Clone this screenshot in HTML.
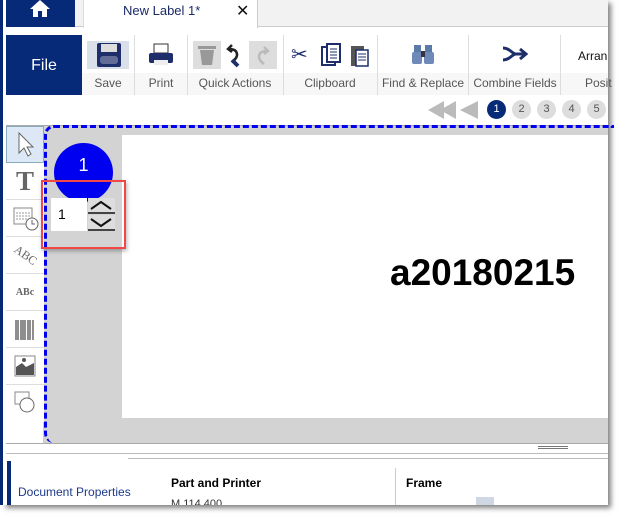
<!DOCTYPE html><html><head><style>
*{margin:0;padding:0;box-sizing:border-box}
body{width:623px;height:519px;background:#fff;position:relative;overflow:hidden;font-family:"Liberation Sans",sans-serif}
.a{position:absolute}
.lbl{position:absolute;top:76px;font-size:12px;color:#555;text-align:center}
.sep{position:absolute;top:35px;width:1px;height:60px;background:#ddd}
.pg{position:absolute;top:100px;width:19px;height:19px;border-radius:50%;background:#ddd;color:#555;font-size:11px;text-align:center;line-height:19px}
.tb{position:absolute;left:6px;width:38px;height:37px;border-bottom:1px solid #ddd;background:#fff;font-family:"Liberation Serif",serif;color:#666;text-align:center;overflow:hidden}
</style></head><body>
<div class="a" style="left:0;top:0;width:3px;height:505px;background:#062a78"></div>
<div class="a" style="left:3px;top:0;width:605px;height:505px;background:#fff;box-shadow:3px 3px 5px rgba(0,0,0,.5)"></div>
<div class="a" style="left:6px;top:0;width:602px;height:27px;background:#f2f2f2;border-bottom:1px solid #ccc"></div>
<div class="a" style="left:6px;top:0;width:69px;height:27px;background:#062a78"></div>
<svg class="a" style="left:28px;top:0" width="24" height="18"><path d="M2 9 L12 0 L22 9 L19 9 L19 17 L14 17 L14 11 L10 11 L10 17 L5 17 L5 9Z" fill="#fff"/></svg>
<div class="a" style="left:83px;top:0;width:175px;height:28px;background:#fff;border-right:1px solid #ccc;border-left:1px solid #ddd"></div>
<div class="a" style="left:123px;top:3px;font-size:13px;color:#1a2a6a">New Label 1*</div>
<div class="a" style="left:236px;top:1px;font-size:16px;color:#111">✕</div>
<div class="a" style="left:6px;top:35px;width:602px;height:60px;background:#fff"></div>
<div class="a" style="left:81px;top:73px;width:527px;height:22px;background:#f7f7f7"></div>
<div class="a" style="left:6px;top:35px;width:76px;height:60px;background:#062a78;color:#fff;font-size:16px;text-align:center;line-height:62px">File</div>
<div class="a" style="left:87px;top:41px;width:42px;height:28px;background:#dae0ea"></div>
<svg class="a" style="left:96px;top:42px" width="26" height="26"><rect x="1" y="1" width="24" height="24" rx="2" fill="#1d2e6b"/><rect x="5" y="2" width="16" height="8" fill="#ddd"/><rect x="4" y="14" width="18" height="8" rx="3" fill="#fff" opacity=".3"/></svg>
<div class="lbl" style="left:87px;width:42px">Save</div>
<div class="sep" style="left:134px"></div>
<svg class="a" style="left:148px;top:43px" width="26" height="24"><rect x="6" y="1" width="14" height="9" fill="#fff" stroke="#333"/><rect x="1" y="10" width="24" height="10" rx="2" fill="#1d2e6b"/><rect x="6" y="17" width="14" height="5" fill="#eee"/></svg>
<div class="lbl" style="left:140px;width:42px">Print</div>
<div class="sep" style="left:187px"></div>
<div class="a" style="left:193px;top:41px;width:28px;height:28px;background:#ddd"></div>
<svg class="a" style="left:196px;top:43px" width="22" height="24"><rect x="2" y="3" width="18" height="3" fill="#999"/><path d="M4 7 L18 7 L16 22 L6 22Z" fill="#999"/></svg>
<svg class="a" style="left:226px;top:42px" width="16" height="26"><path d="M6 3 L2 7 L6 10 M3 7 C12 7 14 14 6 20" stroke="#222" stroke-width="2.5" fill="none"/><path d="M6 18 L12 24" stroke="#1d2e6b" stroke-width="4"/></svg>
<div class="a" style="left:249px;top:41px;width:28px;height:28px;background:#ddd"></div>
<svg class="a" style="left:254px;top:44px" width="18" height="24"><path d="M10 3 L14 7 L10 10 M13 7 C4 7 2 14 10 20" stroke="#bbb" stroke-width="2.5" fill="none"/></svg>
<div class="lbl" style="left:190px;width:90px">Quick Actions</div>
<div class="sep" style="left:283px"></div>
<div class="a" style="left:291px;top:42px;font-size:20px;color:#1d2e6b">✂</div>
<svg class="a" style="left:320px;top:43px" width="22" height="25"><rect x="2" y="4" width="13" height="18" fill="#fff" stroke="#1d2e6b" stroke-width="2"/><rect x="7" y="1" width="13" height="18" fill="#fff" stroke="#1d2e6b" stroke-width="2"/><path d="M10 6h7M10 9h7M10 12h7M10 15h7" stroke="#1d2e6b"/></svg>
<svg class="a" style="left:350px;top:43px" width="20" height="25"><rect x="1" y="3" width="13" height="20" fill="#555"/><rect x="6" y="7" width="12" height="16" fill="#fff" stroke="#1d2e6b" stroke-width="1.5"/><path d="M8 11h8M8 14h8M8 17h8" stroke="#1d2e6b"/></svg>
<div class="lbl" style="left:290px;width:80px">Clipboard</div>
<div class="sep" style="left:377px"></div>
<svg class="a" style="left:411px;top:43px" width="24" height="22"><rect x="3" y="2" width="7" height="8" fill="#5c7aa8"/><rect x="14" y="2" width="7" height="8" fill="#5c7aa8"/><rect x="1" y="9" width="10" height="12" rx="2" fill="#6f8ab8"/><rect x="13" y="9" width="10" height="12" rx="2" fill="#6f8ab8"/><rect x="10" y="8" width="4" height="6" fill="#334"/></svg>
<div class="lbl" style="left:380px;width:86px">Find &amp; Replace</div>
<div class="sep" style="left:468px"></div>
<svg class="a" style="left:502px;top:45px" width="26" height="18"><path d="M1 3 C8 3 10 9 14 9 C10 9 8 15 1 15 M13 9 L23 9 M18 4 L24 9 L18 14" stroke="#1d2e6b" stroke-width="3" fill="none"/></svg>
<div class="lbl" style="left:470px;width:90px">Combine Fields</div>
<div class="sep" style="left:560px"></div>
<div class="a" style="left:578px;top:49px;font-size:12px;color:#111">Arran</div>
<div class="lbl" style="left:585px;width:40px;text-align:left">Posit</div>
<svg class="a" style="left:428px;top:101px" width="54" height="18"><path d="M0 9 L16 0 L16 18Z M12 9 L28 0 L28 18Z M32 9 L50 0 L50 18Z" fill="#bbb"/></svg>
<div class="pg" style="left:487px;background:#062a78;color:#fff">1</div>
<div class="pg" style="left:512px">2</div>
<div class="pg" style="left:537px">3</div>
<div class="pg" style="left:562px">4</div>
<div class="pg" style="left:587px">5</div>
<div class="a" style="left:6px;top:125px;width:602px;height:318px;background:#d3d3d3;border-top:1px solid #aaa"></div>
<div class="a" style="left:44px;top:125px;width:570px;height:318px;border:3px dashed #0000ee;border-radius:10px 0 0 10px;border-right:none;border-bottom:none"></div>
<div class="a" style="left:122px;top:135px;width:486px;height:283px;background:#fff"></div>
<div class="a" style="left:390px;top:252px;font-size:37px;font-weight:bold;color:#000">a20180215</div>
<div class="a" style="left:6px;top:126px;width:38px;height:317px;background:#fff;border-right:1px solid #ccc"></div>
<div class="tb" style="top:126px;background:#dce8f5;border:1px solid #8ab"><svg width="20" height="26" style="margin-top:4px"><path d="M4 2 L4 22 L9 17 L13 25 L16 23 L12 16 L18 16Z" fill="#fff" stroke="#666"/></svg></div>
<div class="tb" style="top:163px;font-size:27px;font-weight:bold;line-height:36px">T</div>
<div class="tb" style="top:200px"><svg width="30" height="30" style="margin-top:3px"><rect x="4" y="5" width="18" height="16" fill="#fff" stroke="#888"/><path d="M6 10h14M6 13h14M6 16h14" stroke="#999" stroke-dasharray="2 1"/><circle cx="22" cy="21" r="6" fill="#fff" stroke="#666"/><path d="M22 17v4h3" stroke="#666" fill="none"/></svg></div>
<div class="tb" style="top:237px"><span style="display:inline-block;font-size:12px;margin-top:11px;transform:rotate(35deg)">ABC</span></div>
<div class="tb" style="top:274px;font-size:10px;line-height:37px;font-weight:bold">ABc</div>
<div class="tb" style="top:311px"><svg width="22" height="20" style="margin-top:9px"><path d="M2 0v20M4 0v20M7 0v20M9 0v20M11 0v20M14 0v20M16 0v20M19 0v20" stroke="#444" stroke-width="1.2"/></svg></div>
<div class="tb" style="top:348px"><svg width="22" height="22" style="margin-top:7px"><rect x="1" y="1" width="20" height="20" fill="#fff" stroke="#888"/><path d="M2 20 L2 12 L8 8 L12 12 L20 8 L20 20Z" fill="#555"/><circle cx="10" cy="5" r="2" fill="#555"/></svg></div>
<div class="tb" style="top:385px;border:none"><svg width="26" height="26" style="margin-top:5px"><rect x="3" y="2" width="14" height="12" fill="#fff" stroke="#888"/><circle cx="15" cy="15" r="7" fill="#fff" stroke="#666"/></svg></div>
<div class="a" style="left:54px;top:143px;width:59px;height:59px;border-radius:50%;background:#0000f0;color:#fff;font-size:18px;text-align:center;line-height:45px">1</div>
<div class="a" style="left:41px;top:180px;width:85px;height:69px;border:2px solid #f04848;box-shadow:1px 2px 4px rgba(0,0,0,.3)"></div>
<div class="a" style="left:51px;top:198px;width:36px;height:33px;background:#fff;font-size:14px;line-height:33px;padding-left:7px">1</div>
<div class="a" style="left:88px;top:198px;width:27px;height:16px;background:#ddd;border-bottom:2px solid #444"><svg width="27" height="14"><path d="M3 11 L13 4 L23 11" stroke="#111" stroke-width="2" fill="none"/></svg></div>
<div class="a" style="left:88px;top:215px;width:27px;height:16px;background:#ddd;border-bottom:2px solid #444"><svg width="27" height="14"><path d="M3 4 L13 11 L23 4" stroke="#111" stroke-width="2" fill="none"/></svg></div>
<div class="a" style="left:6px;top:443px;width:602px;height:1px;background:#aaa"></div>
<div class="a" style="left:538px;top:446px;width:30px;height:3px;border-top:1px solid #777;border-bottom:1px solid #777"></div>
<div class="a" style="left:6px;top:453px;width:602px;height:1px;background:#bbb"></div>
<div class="a" style="left:128px;top:458px;width:480px;height:1px;background:#bbb"></div>
<div class="a" style="left:7px;top:461px;width:4px;height:44px;background:#062a78"></div>
<div class="a" style="left:18px;top:485px;font-size:12px;color:#1d3a8a">Document Properties</div>
<div class="a" style="left:171px;top:476px;font-size:12px;font-weight:bold">Part and Printer</div>
<div class="a" style="left:171px;top:498px;font-size:11px;color:#333;height:7px;overflow:hidden">M 114 400</div>
<div class="a" style="left:395px;top:468px;width:1px;height:37px;background:#ccc"></div>
<div class="a" style="left:406px;top:476px;font-size:12px;font-weight:bold">Frame</div>
<div class="a" style="left:476px;top:497px;width:18px;height:8px;background:#cfd6e4"></div>
</body></html>
